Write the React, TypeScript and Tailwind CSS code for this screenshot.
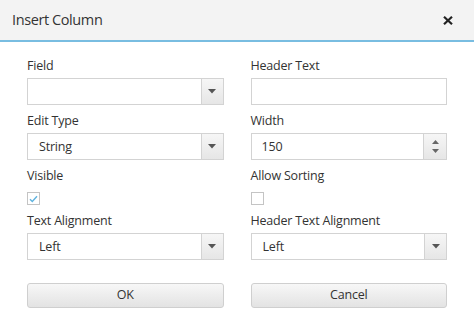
import type { ReactNode } from "react";

const font = { fontFamily: '"Open Sans", "Noto Sans", Arial, sans-serif' };

function Label({ children }: { children: ReactNode }) {
  return <div className="h-[20px] leading-[20px] mt-[6px] mb-[2px] text-[12.5px] tracking-[-0.2px] text-[#333]">{children}</div>;
}

function Caret() {
  return (
    <svg width="8" height="5" viewBox="0 0 8 5">
      <path d="M0 0h8L4 4.5z" fill="#555" />
    </svg>
  );
}

function Select({ value }: { value?: string }) {
  return (
    <div className="flex h-[27px] border border-[#d3d3d3] bg-white">
      <div className="flex-1 pl-[11px] leading-[25px] text-[12.5px] tracking-[-0.2px] text-[#333]">{value}</div>
      <div className="w-[22px] flex items-center justify-center border-l border-[#d3d3d3] bg-gradient-to-b from-[#f6f6f6] to-[#e6e6e6]">
        <Caret />
      </div>
    </div>
  );
}

function Check({ checked }: { checked?: boolean }) {
  return (
    <div className="mt-[6px] mb-[1px] w-[13px] h-[13px] border border-[#c4c4c4] bg-white flex items-center justify-center">
      {checked && (
        <svg width="9" height="8" viewBox="0 0 9 8">
          <path d="M1 4.2l2.3 2.3L8 1.3" fill="none" stroke="#5fb3df" strokeWidth="1.4" />
        </svg>
      )}
    </div>
  );
}

function Button({ children }: { children: ReactNode }) {
  return (
    <button className="w-full h-[25px] rounded-[3px] border border-[#cfcfcf] bg-gradient-to-b from-[#f7f7f7] to-[#e3e3e3] text-[12.5px] tracking-[-0.2px] text-[#333]">
      {children}
    </button>
  );
}

export default function App() {
  return (
    <div className="w-[474px] h-[323px] bg-white overflow-hidden" style={font}>
      <div className="h-[42px] bg-[#f3f3f3] border-b-2 border-[#79bde1] flex items-center justify-between pl-[12px] pr-[21px]">
        <span className="text-[14.5px] tracking-[-0.4px] text-[#333]">Insert Column</span>
        <svg width="10" height="9" viewBox="0 0 10 9">
          <path d="M1 0.8l8 7.4M9 0.8l-8 7.4" stroke="#222" strokeWidth="2.2" />
        </svg>
      </div>
      <div className="grid grid-cols-2 gap-x-[27px] px-[27px] pt-[8px]">
        <div>
          <Label>Field</Label>
          <Select />
          <Label>Edit Type</Label>
          <Select value="String" />
          <Label>Visible</Label>
          <Check checked />
          <Label>Text Alignment</Label>
          <Select value="Left" />
        </div>
        <div>
          <Label>Header Text</Label>
          <div className="h-[27px] border border-[#d3d3d3] bg-white" />
          <Label>Width</Label>
          <div className="flex h-[27px] border border-[#d3d3d3] bg-white">
            <div className="flex-1 pl-[10px] leading-[25px] text-[12.5px] tracking-[-0.2px] text-[#333]">150</div>
            <div className="w-[23px] flex flex-col items-center justify-center gap-[5px] border-l border-[#d3d3d3] bg-gradient-to-b from-[#f6f6f6] to-[#e6e6e6]">
              <svg width="7" height="4" viewBox="0 0 7 4"><path d="M0 4h7L3.5 0z" fill="#666" /></svg>
              <svg width="7" height="4" viewBox="0 0 7 4"><path d="M0 0h7L3.5 4z" fill="#666" /></svg>
            </div>
          </div>
          <Label>Allow Sorting</Label>
          <Check />
          <Label>Header Text Alignment</Label>
          <Select value="Left" />
        </div>
        <div className="mt-[21px]">
          <Button>OK</Button>
        </div>
        <div className="mt-[21px]">
          <Button>Cancel</Button>
        </div>
      </div>
    </div>
  );
}
